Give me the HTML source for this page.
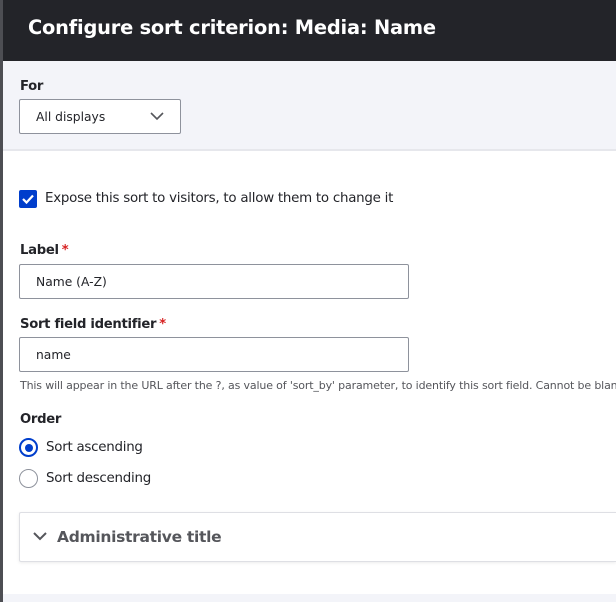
<!DOCTYPE html>
<html><head><style>
*{box-sizing:border-box;margin:0;padding:0}
html,body{overflow:hidden}
body{width:616px;height:602px;background:#fff;font-family:"DejaVu Sans","Liberation Sans",sans-serif;color:#232429;position:relative}
.a{position:absolute;white-space:nowrap}
.strip{left:0;top:0;width:3px;height:602px;background:#4d4e53}
.hdr{left:3px;top:0;width:613px;height:61px;background:#232429}
.title{left:28px;top:16px;font-size:19.4px;font-weight:bold;color:#fff;letter-spacing:-0.2px}
.gray{left:3px;top:61px;width:613px;height:90px;background:#f3f4f9;border-bottom:2px solid #e6e7ec}
.lbl{font-size:13.2px;font-weight:bold;letter-spacing:-0.3px}
.req{color:#d72222;margin-left:3px}
.box{border:1px solid #8e929c;border-radius:2px;background:#fff;font-size:12.3px;padding-left:16px;display:flex;align-items:center}
.txt{font-size:13.4px;letter-spacing:-0.25px}
.bot{left:3px;top:594px;width:613px;height:8px;background:#f3f4f9}
</style></head><body>
<div class="a strip"></div>
<div class="a hdr"></div>
<div class="a title">Configure sort criterion: Media: Name</div>
<div class="a gray"></div>
<div class="a lbl" style="left:20px;top:79px">For</div>
<div class="a box" style="left:19px;top:99px;width:162px;height:35px">All displays
<svg style="position:absolute;right:16px;top:12px" width="14" height="9" viewBox="0 0 14 9"><path d="M1 1l6 6 6-6" fill="none" stroke="#55565b" stroke-width="1.6"/></svg></div>
<div class="a" style="left:19px;top:190px;width:18px;height:18px;background:#003ecc;border-radius:2px"><svg width="18" height="18" viewBox="0 0 18 18"><path d="M4 9l3.5 3.5L14 5.5" fill="none" stroke="#fff" stroke-width="2.2"/></svg></div>
<div class="a txt" style="left:45px;top:191px">Expose this sort to visitors, to allow them to change it</div>
<div class="a lbl" style="left:20px;top:243px">Label<span class="req">*</span></div>
<div class="a box" style="left:19px;top:264px;width:390px;height:35px">Name (A-Z)</div>
<div class="a lbl" style="left:20px;top:317px">Sort field identifier<span class="req">*</span></div>
<div class="a box" style="left:19px;top:337px;width:390px;height:35px">name</div>
<div class="a" style="left:20px;top:379px;font-size:11px;color:#55565b;letter-spacing:-0.15px">This will appear in the URL after the ?, as value of 'sort_by' parameter, to identify this sort field. Cannot be blank.</div>
<div class="a lbl" style="left:20px;top:412px">Order</div>
<div class="a" style="left:19px;top:438px;width:19px;height:19px;border-radius:50%;border:2px solid #003ecc;background:#fff"><div style="position:absolute;left:3.5px;top:3.5px;width:8px;height:8px;border-radius:50%;background:#003ecc"></div></div>
<div class="a txt" style="left:46px;top:440px">Sort ascending</div>
<div class="a" style="left:19px;top:469px;width:19px;height:19px;border-radius:50%;border:1px solid #8e929c;background:#fff"></div>
<div class="a txt" style="left:46px;top:471px">Sort descending</div>
<div class="a" style="left:19px;top:512px;width:597px;height:50px;border:1px solid #dedfe4;border-right:none;border-radius:2px 0 0 2px;box-shadow:0 1px 3px rgba(0,0,0,.08)"></div>
<svg class="a" style="left:33px;top:532px" width="14" height="9" viewBox="0 0 14 9"><path d="M1 1l6 6 6-6" fill="none" stroke="#55565b" stroke-width="2"/></svg>
<div class="a" style="left:57px;top:528px;font-size:15.5px;font-weight:bold;color:#55565b;letter-spacing:-0.3px">Administrative title</div>
<div class="a bot"></div>
</body></html>
